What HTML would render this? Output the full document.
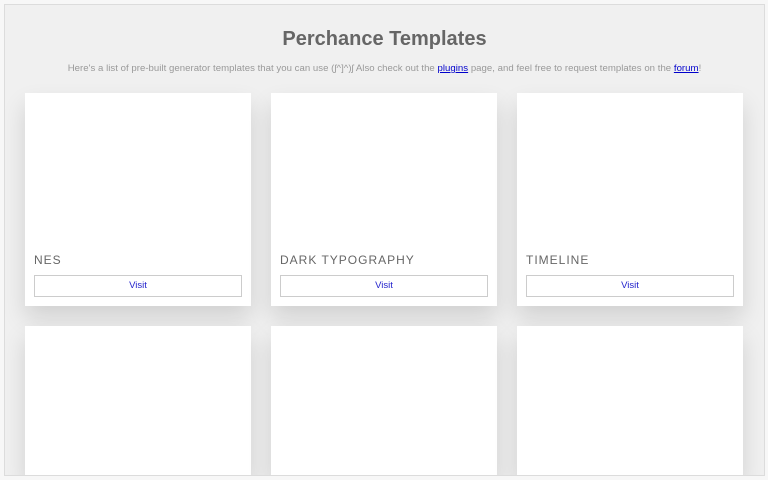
<!DOCTYPE html>
<html><head><style>
html,body{margin:0;padding:0;background:#f7f7f7;width:768px;height:480px;overflow:hidden;font-family:"Liberation Sans",Arial,sans-serif}
.frame{position:absolute;left:4px;top:4px;width:759px;height:470px;border:1px solid #dcdcdc;background:#f0f0f0;overflow:hidden}
h1{position:absolute;left:0;width:759px;top:23px;margin:0;text-align:center;font-size:20px;font-weight:bold;color:#666}
p{position:absolute;left:0;width:759px;top:58px;margin:0;text-align:center;font-size:9.6px;letter-spacing:0.03px;color:#999}
p a{color:#00c;text-decoration:underline}
.card{position:absolute;width:226px;height:213px;background:#fff;box-shadow:0 12px 22px rgba(0,0,0,0.13)}
.t{position:absolute;left:9px;top:160px;font-size:12px;letter-spacing:1px;color:#666}
.b{position:absolute;left:9px;top:182px;width:206px;height:20px;border:1px solid #ccc;text-align:center;line-height:20px;font-size:9.5px;color:#22c}
</style></head><body>
<div class="frame">
<h1>Perchance Templates</h1>
<p>Here's a list of pre-built generator templates that you can use (ʃ^]^)ʃ Also check out the <a>plugins</a> page, and feel free to request templates on the <a>forum</a>!</p>
<div class="card" style="left:20px;top:88px"><div class="t">NES</div><div class="b">Visit</div></div>
<div class="card" style="left:266px;top:88px"><div class="t">DARK TYPOGRAPHY</div><div class="b">Visit</div></div>
<div class="card" style="left:512px;top:88px"><div class="t">TIMELINE</div><div class="b">Visit</div></div>
<div class="card" style="left:20px;top:321px;height:149px"></div>
<div class="card" style="left:266px;top:321px;height:149px"></div>
<div class="card" style="left:512px;top:321px;height:149px"></div>
</div>
</body></html>
